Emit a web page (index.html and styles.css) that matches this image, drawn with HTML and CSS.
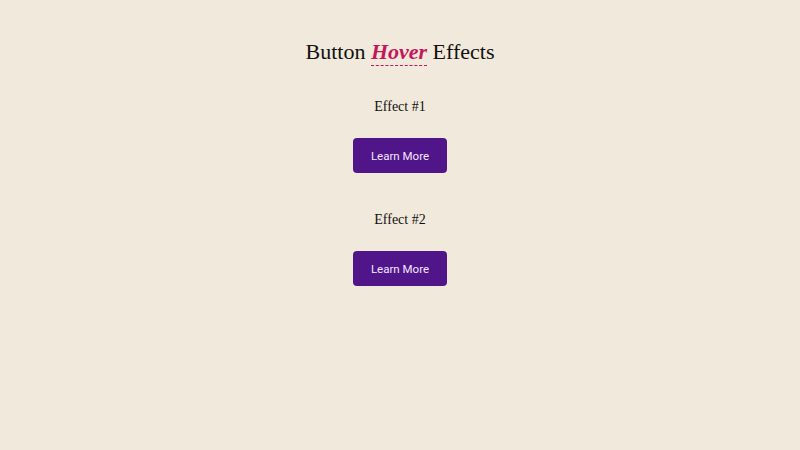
FILE: index.html
```html
<!DOCTYPE html>
<html lang="en">
<head>
    <meta charset="UTF-8">
    <title>Button Hover Effects</title>
    <link rel="stylesheet" href="styles.css">
</head>
<body>
    <div class="header">
        <h1>Button <span class="accent">Hover</span> Effects</h1>
    </div>

    <div class="effects">
        <div class="effect">
            <h2>Effect #1</h2>
            <button class="btn btn-one">Learn More</button>
        </div>
        <div class="effect">
            <h2>Effect #2</h2>
            <button class="btn btn-two">Learn More</button>
        </div>
    </div>
</body>
</html>
```

FILE: styles.css
```css
body {
    margin: 0;
    padding: 0;
    background-color: #f1e9db;
    font-family: 'Liberation Serif', serif;
    color: #111;
}

.header {
    text-align: center;
    padding-top: 39px;
}

.header h1 {
    margin: 0;
    font-size: 22px;
    font-weight: normal;
    line-height: 26px;
}

.accent {
    color: #c2185b;
    font-style: italic;
    font-weight: bold;
    padding-bottom: 1px;
    border-bottom: 1px dashed #c2185b;
}

.effects {
    display: flex;
    flex-direction: column;
    align-items: center;
    gap: 38px;
    margin-top: 33px;
}

.effect {
    display: flex;
    flex-direction: column;
    align-items: center;
    gap: 22px;
}

.effect h2 {
    margin: 0;
    font-size: 14px;
    font-weight: normal;
    line-height: 18px;
}

.btn {
    width: 94px;
    height: 35px;
    border: none;
    border-radius: 4px;
    background: #4f1589;
    color: #f3e8ff;
    font-family: 'Roboto', sans-serif;
    font-size: 11.5px;
    cursor: pointer;
    transition: all 0.3s;
}
```
